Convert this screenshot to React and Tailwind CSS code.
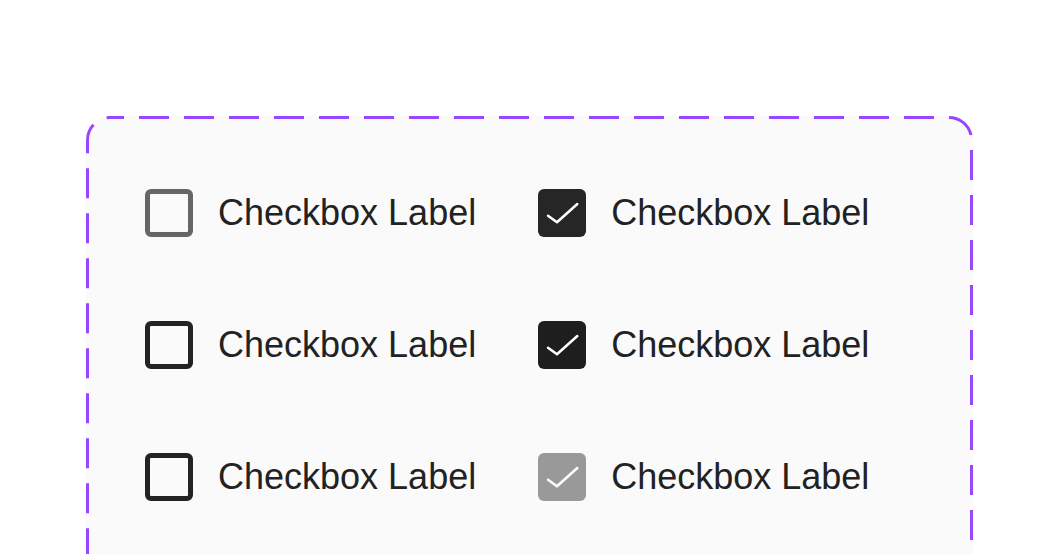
export default function App() {
  const rows = [
    [
      { checked: false, color: 'border-[#666666]' },
      { checked: true, color: 'bg-[#262626]' },
    ],
    [
      { checked: false, color: 'border-[#232323]' },
      { checked: true, color: 'bg-[#1e1e1e]' },
    ],
    [
      { checked: false, color: 'border-[#232323]' },
      { checked: true, color: 'bg-[#999999]' },
    ],
  ]

  return (
    <div className="w-[1056px] h-[554px] bg-white overflow-hidden pt-[116px] pl-[86px]">
      <div className="relative w-[887px] h-[460px] rounded-[24px] bg-[#fafafa] pl-[59px] pt-[73px]">
        {/* dashed component-set outline */}
        <svg className="absolute inset-0 pointer-events-none" width="887" height="460">
          <rect
            x="1.5"
            y="1.5"
            width="884"
            height="457"
            rx="22.5"
            fill="none"
            stroke="#9747ff"
            strokeWidth="3"
            strokeDasharray="30 15"
            strokeDashoffset="16"
          />
        </svg>
        <div className="flex flex-col gap-[84px]">
          {rows.map((row, i) => (
            <div key={i} className="flex gap-[62px]">
              {row.map((item, j) => (
                <label key={j} className="flex items-center gap-[25px] h-[48px]">
                  {item.checked ? (
                    <span className={`w-[48px] h-[48px] rounded-[6px] ${item.color} flex items-center justify-center`}>
                      <svg width="48" height="48" viewBox="0 0 48 48">
                        <path
                          d="M10 26.7 L19 33.3 L39.3 15"
                          fill="none"
                          stroke="white"
                          strokeWidth="2.5"
                          strokeLinecap="round"
                          strokeLinejoin="round"
                        />
                      </svg>
                    </span>
                  ) : (
                    <span className={`w-[48px] h-[48px] rounded-[6px] border-[5px] ${item.color}`} />
                  )}
                  <span className="text-[36px] leading-none text-[#222222] font-['Liberation_Sans',Arial,sans-serif]">
                    Checkbox Label
                  </span>
                </label>
              ))}
            </div>
          ))}
        </div>
      </div>
    </div>
  )
}
